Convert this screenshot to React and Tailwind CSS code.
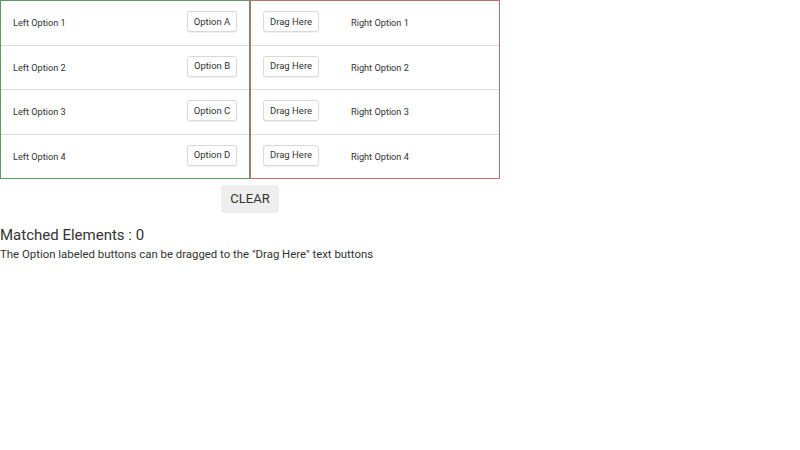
import React from 'react';

const LEFT = [
  { label: 'Left Option 1', opt: 'Option A' },
  { label: 'Left Option 2', opt: 'Option B' },
  { label: 'Left Option 3', opt: 'Option C' },
  { label: 'Left Option 4', opt: 'Option D' },
];

const RIGHT = ['Right Option 1', 'Right Option 2', 'Right Option 3', 'Right Option 4'];

const btn = 'h-[21px] whitespace-nowrap rounded-[3px] border border-[#d9d9d9] bg-white text-[9.5px] text-[#333] shadow-[0_1px_1px_rgba(0,0,0,0.06)]';

export default function App() {
  return (
    <div className="min-h-screen bg-white text-[#333] font-['Roboto',Arial,sans-serif]">
      <div className="flex w-[500px]">
        {/* Left */}
        <div className="w-[250px] border border-[#5e9a5e]">
          {LEFT.map((r, i) => (
            <div key={r.label}
              className={`flex items-center justify-between pl-[12px] pr-[12px] ${i < 3 ? 'h-[44.5px] border-b border-[#dedede]' : 'h-[43.5px]'}`}>
              <span className="text-[9.2px] mt-[1px]">{r.label}</span>
              <button className={`${btn} w-[50px] -mt-[2px]`}>{r.opt}</button>
            </div>
          ))}
        </div>

        {/* Right */}
        <div className="w-[250px] border border-[#c07070]">
          {RIGHT.map((label, i) => (
            <div key={label}
              className={`flex items-center pl-[12px] ${i < 3 ? 'h-[44.5px] border-b border-[#dedede]' : 'h-[43.5px]'}`}>
              <button className={`${btn} w-[56px] -mt-[2px]`}>Drag Here</button>
              <span className="text-[9.2px] ml-[32px] mt-[1px]">{label}</span>
            </div>
          ))}
        </div>
      </div>

      <div className="w-[500px] flex justify-center mt-[6px]">
        <button className="h-[28px] w-[58px] rounded-[3px] bg-[#eeeeee] text-[13px] text-[#333]">CLEAR</button>
      </div>

      <div className="mt-[12px] text-[15px] leading-[20px]">Matched Elements : 0</div>
      <div className="mt-[1px] text-[11.4px] leading-[16px]">The Option labeled buttons can be dragged to the "Drag Here" text buttons</div>
    </div>
  );
}
